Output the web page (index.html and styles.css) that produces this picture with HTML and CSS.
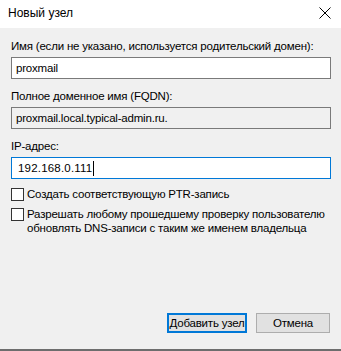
FILE: index.html
```html
<!DOCTYPE html>
<html lang="ru">
<head>
<meta charset="utf-8">
<title>Новый узел</title>
<link rel="stylesheet" href="styles.css">
</head>
<body>
<div class="dialog">
  <div class="titlebar">
    <span class="title">Новый узел</span>
    <svg class="close" width="12" height="12" viewBox="0 0 12 12"><path d="M0.5 0.5 L11.5 11.5 M11.5 0.5 L0.5 11.5" stroke="#000" stroke-width="1" fill="none"/></svg>
  </div>
  <div class="content">
    <div class="group">
      <div class="label">Имя (если не указано, используется родительский домен):</div>
      <div class="field">proxmail</div>
    </div>
    <div class="group">
      <div class="label">Полное доменное имя (FQDN):</div>
      <div class="field readonly">proxmail.local.typical-admin.ru.</div>
    </div>
    <div class="group">
      <div class="label">IP-адрес:</div>
      <div class="field focused"><span class="ip">192.168.0.111</span><span class="caret"></span></div>
    </div>
    <div class="check">
      <span class="box"></span>
      <span class="ctext">Создать соответствующую PTR-запись</span>
    </div>
    <div class="check second">
      <span class="box"></span>
      <span class="ctext">Разрешать любому прошедшему проверку пользователю<br>обновлять DNS-записи с таким же именем владельца</span>
    </div>
    <div class="spacer"></div>
    <div class="buttons">
      <div class="btn default">Добавить узел</div>
      <div class="btn">Отмена</div>
    </div>
  </div>
</div>
</body>
</html>
```
FILE: styles.css
```css
html, body {
  margin: 0;
  padding: 0;
}
body {
  width: 341px;
  height: 351px;
  overflow: hidden;
  background: #f0f0f0;
  font-family: "Liberation Sans", Arial, sans-serif;
  font-size: 11.5px;
  letter-spacing: -0.2px;
  color: #000;
}
.dialog {
  display: flex;
  flex-direction: column;
  height: 349px;
  border-bottom: 2px solid #6d6d6d;
}
.titlebar {
  height: 28px;
  background: #fff;
  display: flex;
  align-items: center;
  justify-content: space-between;
  padding: 0 10px 0 8px;
}
.title {
  font-size: 12px;
  letter-spacing: 0;
  line-height: 16px;
  margin-top: -2px;
}
.close {
  display: block;
  margin-top: -2px;
}
.content {
  flex: 1;
  display: flex;
  flex-direction: column;
  padding: 10px 10px 0 11px;
}
.group {
  margin-bottom: 9px;
}
.label {
  line-height: 16px;
  height: 16px;
  margin-bottom: 3px;
  white-space: nowrap;
}
.field {
  box-sizing: border-box;
  height: 22px;
  width: 320px;
  border: 1px solid #7a7a7a;
  background: #fff;
  padding: 0 4px;
  line-height: 20px;
  white-space: nowrap;
  display: flex;
  align-items: center;
}
.field.readonly {
  background: #f0f0f0;
}
.field.focused {
  border-color: #0078d7;
  padding-left: 6px;
}
.ip {
  letter-spacing: 0.2px;
}
.caret {
  display: inline-block;
  width: 1px;
  height: 15px;
  background: #000;
  margin-left: 1px;
}
.check {
  display: flex;
  align-items: flex-start;
  line-height: 14px;
  white-space: nowrap;
}
.check.second {
  margin-top: 7px;
}
.box {
  box-sizing: border-box;
  flex: none;
  width: 13px;
  height: 13px;
  border: 1px solid #333;
  background: #fff;
  margin-right: 3px;
}
.ctext {
  margin-top: -1px;
}
.spacer {
  flex: 1;
}
.buttons {
  display: flex;
  justify-content: flex-end;
  gap: 9px;
  padding-right: 1px;
  margin-bottom: 16px;
}
.btn {
  box-sizing: border-box;
  width: 74px;
  height: 20px;
  border: 1px solid #adadad;
  background: #e1e1e1;
  display: flex;
  align-items: center;
  justify-content: center;
  white-space: nowrap;
}
.btn.default {
  width: 80px;
  border: 2px solid #0078d7;
}
```
